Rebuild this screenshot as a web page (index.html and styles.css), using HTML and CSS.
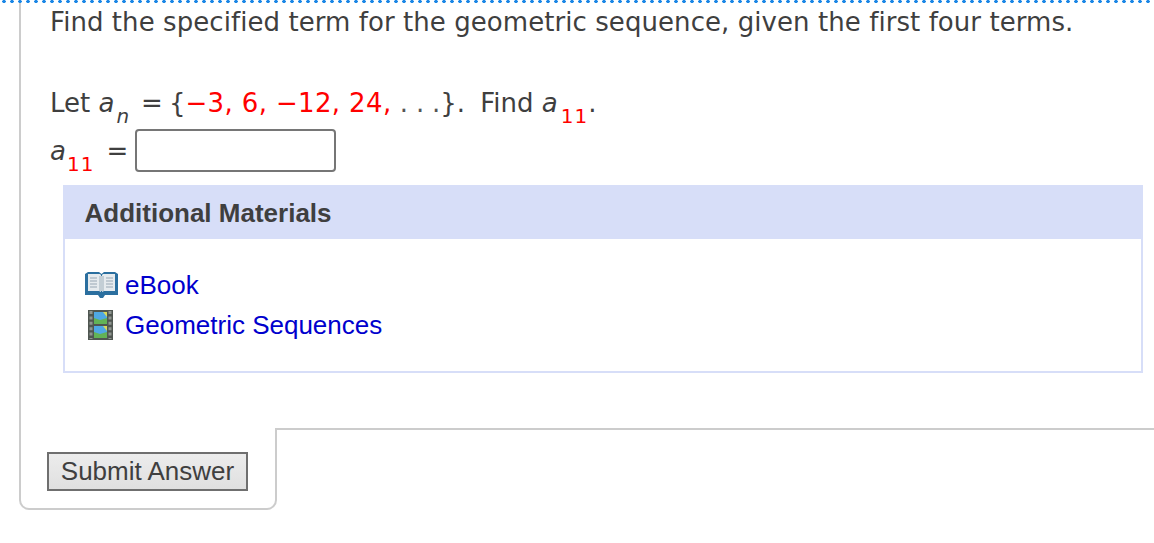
FILE: index.html
```html
<!DOCTYPE html>
<html lang="en">
<head>
  <meta charset="UTF-8">
  <title>Geometric Sequence Question</title>
  <link rel="stylesheet" href="styles.css">
</head>
<body>
  <div class="dots"></div>

  <!-- Question text and answer box -->
  <div class="question">
    <p class="prompt">Find the specified term for the geometric sequence, given the first four terms.</p>

    <p class="let-line">Let <i>a</i><sub class="sub-plain"><i>n</i></sub><span class="eq">=</span>{<span class="red">&minus;3, 6, &minus;12, 24,</span> <span class="ellipsis">. . .</span>}. <span class="find">Find</span> <i>a</i><sub class="sub-red">11</sub>.</p>

    <div class="answer-line">
      <span class="term"><i>a</i><sub class="sub-red">11</sub></span>
      <span class="eq">=</span>
      <input class="answer" type="text">
    </div>

    <!-- Additional materials box -->
    <div class="materials">
      <div class="materials-head">Additional Materials</div>
      <div class="materials-body">
        <a class="res-link" href="#">
          <svg class="res-icon" width="33" height="28" viewBox="0 0 33 28">
            <path d="M0 3l3-2h11l2.500 2 2.500-2h11l3 2v21H20l-2 3h-3l-2-3H0z" fill="#2b6f9f"/>
            <path d="M3 3h12l1 1v17l-2-1H3z" fill="#e6ebee"/>
            <path d="M30 3H18l-1 1v17l2-1h11z" fill="#e6ebee"/>
            <path d="M5 7h7M5 10h7M5 13h7M5 16h7M21 7h7M21 10h7M21 13h7M21 16h7" stroke="#b3bfc7" stroke-width="1.500"/>
            <path d="M14 5h5v15h-5z" fill="#c3ced5"/>
          </svg>
          <span>eBook</span>
        </a>
        <a class="res-link" href="#">
          <svg class="res-icon" width="33" height="30" viewBox="0 0 33 30">
            <rect x="3" y="0" width="25" height="30" fill="#4f5651"/>
            <path d="M9 2h13v12H9z" fill="#62b356"/>
            <path d="M9 2h13v6l-7 2-6-2z" fill="#4fa8e4"/>
            <path d="M18 2h4v5z" fill="#d9d95a"/>
            <path d="M9 16h13v12H9z" fill="#62b356"/>
            <path d="M9 16h13v6l-7 2-6-2z" fill="#4fa8e4"/>
            <path d="M18 16h4v5z" fill="#d9d95a"/>
            <path d="M6 1v28M25 1v28" stroke="#8f9590" stroke-width="3" stroke-dasharray="3 2.400"/>
          </svg>
          <span>Geometric Sequences</span>
        </a>
      </div>
    </div>
  </div>

  <!-- Submit tab and rule running to the right edge -->
  <div class="footer">
    <div class="submit-tab">
      <button class="submit" type="button">Submit Answer</button>
    </div>
    <div class="footer-rule"></div>
  </div>
</body>
</html>
```

FILE: styles.css
```css
body {
  margin: 0;
  background-color: #fff;
  color: #3f3f3f;
  font-family: "DejaVu Sans", sans-serif;
  font-size: 26px;
  font-variant-ligatures: none;
  overflow: hidden;
}

p {
  margin: 0;
}

.dots {
  height: 3px;
  background-image: radial-gradient(circle at 4px 1.5px, #1b87e6 1.6px, transparent 1.9px);
  background-size: 8px 3px;
}

.question {
  margin-left: 19px;
  border-left: 2px solid #ccc;
  padding-left: 29px;
  height: 425px;
  box-sizing: border-box;
}

.prompt {
  line-height: 38px;
  letter-spacing: 0.065px;
  white-space: nowrap;
}

.let-line {
  margin-top: 43px;
  line-height: 38px;
  white-space: nowrap;
}

.red {
  color: #f00;
  letter-spacing: 0.36px;
}

.ellipsis {
  color: #555;
  letter-spacing: -0.2px;
}

.find {
  margin-left: 7px;
}

.eq {
  margin: 0 6px 0 12px;
}

sub {
  font-size: 20px;
  line-height: 0;
  vertical-align: -11px;
}

.sub-red {
  color: #f00;
  letter-spacing: 1px;
  margin-left: 3px;
}

.sub-plain {
  margin-left: 2px;
}

.answer-line {
  display: flex;
  align-items: center;
  margin-top: 7px;
  height: 43px;
}

.term .sub-red {
  margin-left: 1px;
}

.answer-line .eq {
  margin: 0 7px 0 12px;
}

.answer {
  width: 201px;
  height: 43px;
  box-sizing: border-box;
  border: 2px solid #767676;
  border-radius: 4px;
  padding: 0;
  margin: 0;
}

.materials {
  margin-top: 13px;
  margin-left: 13px;
  margin-right: 11px;
  font-family: "Liberation Sans", sans-serif;
}

.materials-head {
  background-color: #d7def8;
  height: 54px;
  line-height: 57px;
  padding-left: 21.5px;
  font-size: 26px;
  font-weight: bold;
}

.materials-body {
  border: 2px solid #d7def8;
  border-top: none;
  padding: 26px 20px 25px 20px;
  height: 134px;
  box-sizing: border-box;
}

.res-link {
  display: flex;
  align-items: center;
  height: 40px;
  color: #0000cd;
  font-size: 26px;
  text-decoration: none;
}

.res-icon {
  margin-right: 7px;
  flex: none;
}

.footer {
  display: flex;
  margin-left: 19px;
}

.submit-tab {
  width: 258px;
  height: 82px;
  box-sizing: border-box;
  border: 2px solid #ccc;
  border-top: none;
  border-radius: 0 0 10px 10px;
  padding: 24px 0 0 26px;
}

.submit {
  width: 201px;
  height: 39px;
  background: linear-gradient(#ececec, #e0e0e0);
  border: 2px solid #6f6f6f;
  border-radius: 0;
  color: #3f3f3f;
  font-family: "Liberation Sans", sans-serif;
  font-size: 26px;
  padding: 0;
}

.footer-rule {
  flex: 1;
  border-top: 2px solid #ccc;
  margin-left: -1px;
}
```
